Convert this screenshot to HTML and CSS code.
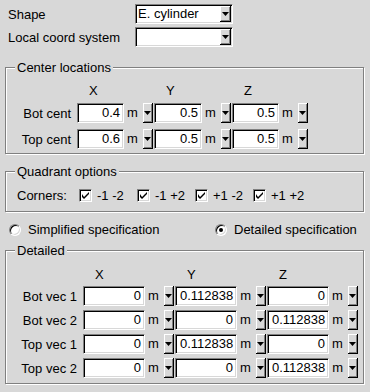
FILE: index.html
```html
<!DOCTYPE html>
<html lang="en">
<head>
  <meta charset="UTF-8">
  <title>Shape dialog</title>
  <link rel="stylesheet" href="styles.css">
</head>
<body>
  <div class="dialog">
    <div class="field-row">
      <span class="lbl">Shape</span>
      <div class="combo">
        <span class="combo-text">E. cylinder</span>
        <span class="drop-btn"><svg width="7" height="4" viewBox="0 0 7 4"><path d="M0 0H7L3.5 4Z" fill="#000"/></svg></span>
      </div>
    </div>
    <div class="field-row">
      <span class="lbl">Local coord system</span>
      <div class="combo">
        <span class="combo-text"></span>
        <span class="drop-btn"><svg width="7" height="4" viewBox="0 0 7 4"><path d="M0 0H7L3.5 4Z" fill="#000"/></svg></span>
      </div>
    </div>

    <fieldset class="group group-center">
      <legend>Center locations</legend>
      <div class="grid grid-center">
        <span></span><span class="hdr">X</span><span class="hdr">Y</span><span class="hdr">Z</span>

        <span class="row-lbl">Bot cent</span>
        <div class="cell"><span class="num">0.4</span><div class="unit">m<span class="drop-btn"><svg width="7" height="4" viewBox="0 0 7 4"><path d="M0 0H7L3.5 4Z" fill="#000"/></svg></span></div></div>
        <div class="cell"><span class="num">0.5</span><div class="unit">m<span class="drop-btn"><svg width="7" height="4" viewBox="0 0 7 4"><path d="M0 0H7L3.5 4Z" fill="#000"/></svg></span></div></div>
        <div class="cell"><span class="num">0.5</span><div class="unit">m<span class="drop-btn"><svg width="7" height="4" viewBox="0 0 7 4"><path d="M0 0H7L3.5 4Z" fill="#000"/></svg></span></div></div>

        <span class="row-lbl">Top cent</span>
        <div class="cell"><span class="num">0.6</span><div class="unit">m<span class="drop-btn"><svg width="7" height="4" viewBox="0 0 7 4"><path d="M0 0H7L3.5 4Z" fill="#000"/></svg></span></div></div>
        <div class="cell"><span class="num">0.5</span><div class="unit">m<span class="drop-btn"><svg width="7" height="4" viewBox="0 0 7 4"><path d="M0 0H7L3.5 4Z" fill="#000"/></svg></span></div></div>
        <div class="cell"><span class="num">0.5</span><div class="unit">m<span class="drop-btn"><svg width="7" height="4" viewBox="0 0 7 4"><path d="M0 0H7L3.5 4Z" fill="#000"/></svg></span></div></div>
      </div>
    </fieldset>

    <fieldset class="group group-quad">
      <legend>Quadrant options</legend>
      <div class="corners">
        <span class="corners-lbl">Corners:</span>
        <span class="check-item"><span class="checkbox"><svg width="7" height="7" viewBox="0 0 7 7"><path d="M0 2V5L2 7L7 2V0L2 5Z" fill="#000"/></svg></span>-1 -2</span>
        <span class="check-item"><span class="checkbox"><svg width="7" height="7" viewBox="0 0 7 7"><path d="M0 2V5L2 7L7 2V0L2 5Z" fill="#000"/></svg></span>-1 +2</span>
        <span class="check-item"><span class="checkbox"><svg width="7" height="7" viewBox="0 0 7 7"><path d="M0 2V5L2 7L7 2V0L2 5Z" fill="#000"/></svg></span>+1 -2</span>
        <span class="check-item"><span class="checkbox"><svg width="7" height="7" viewBox="0 0 7 7"><path d="M0 2V5L2 7L7 2V0L2 5Z" fill="#000"/></svg></span>+1 +2</span>
      </div>
    </fieldset>

    <div class="radios">
      <span class="radio-item first"><span class="radio"></span>Simplified specification</span>
      <span class="radio-item"><span class="radio checked"></span>Detailed specification</span>
    </div>

    <fieldset class="group group-detail">
      <legend>Detailed</legend>
      <div class="grid grid-detail">
        <span></span><span class="hdr">X</span><span class="hdr">Y</span><span class="hdr">Z</span>

        <span class="row-lbl">Bot vec 1</span>
        <div class="cell"><span class="num">0</span><div class="unit">m<span class="drop-btn"><svg width="7" height="4" viewBox="0 0 7 4"><path d="M0 0H7L3.5 4Z" fill="#000"/></svg></span></div></div>
        <div class="cell"><span class="num left">0.112838</span><div class="unit">m<span class="drop-btn"><svg width="7" height="4" viewBox="0 0 7 4"><path d="M0 0H7L3.5 4Z" fill="#000"/></svg></span></div></div>
        <div class="cell"><span class="num">0</span><div class="unit">m<span class="drop-btn"><svg width="7" height="4" viewBox="0 0 7 4"><path d="M0 0H7L3.5 4Z" fill="#000"/></svg></span></div></div>

        <span class="row-lbl">Bot vec 2</span>
        <div class="cell"><span class="num">0</span><div class="unit">m<span class="drop-btn"><svg width="7" height="4" viewBox="0 0 7 4"><path d="M0 0H7L3.5 4Z" fill="#000"/></svg></span></div></div>
        <div class="cell"><span class="num">0</span><div class="unit">m<span class="drop-btn"><svg width="7" height="4" viewBox="0 0 7 4"><path d="M0 0H7L3.5 4Z" fill="#000"/></svg></span></div></div>
        <div class="cell"><span class="num left">0.112838</span><div class="unit">m<span class="drop-btn"><svg width="7" height="4" viewBox="0 0 7 4"><path d="M0 0H7L3.5 4Z" fill="#000"/></svg></span></div></div>

        <span class="row-lbl">Top vec 1</span>
        <div class="cell"><span class="num">0</span><div class="unit">m<span class="drop-btn"><svg width="7" height="4" viewBox="0 0 7 4"><path d="M0 0H7L3.5 4Z" fill="#000"/></svg></span></div></div>
        <div class="cell"><span class="num left">0.112838</span><div class="unit">m<span class="drop-btn"><svg width="7" height="4" viewBox="0 0 7 4"><path d="M0 0H7L3.5 4Z" fill="#000"/></svg></span></div></div>
        <div class="cell"><span class="num">0</span><div class="unit">m<span class="drop-btn"><svg width="7" height="4" viewBox="0 0 7 4"><path d="M0 0H7L3.5 4Z" fill="#000"/></svg></span></div></div>

        <span class="row-lbl">Top vec 2</span>
        <div class="cell"><span class="num">0</span><div class="unit">m<span class="drop-btn"><svg width="7" height="4" viewBox="0 0 7 4"><path d="M0 0H7L3.5 4Z" fill="#000"/></svg></span></div></div>
        <div class="cell"><span class="num">0</span><div class="unit">m<span class="drop-btn"><svg width="7" height="4" viewBox="0 0 7 4"><path d="M0 0H7L3.5 4Z" fill="#000"/></svg></span></div></div>
        <div class="cell"><span class="num left">0.112838</span><div class="unit">m<span class="drop-btn"><svg width="7" height="4" viewBox="0 0 7 4"><path d="M0 0H7L3.5 4Z" fill="#000"/></svg></span></div></div>
      </div>
    </fieldset>
  </div>
</body>
</html>
```

FILE: styles.css
```css
* {
  box-sizing: border-box;
  margin: 0;
  padding: 0;
}

body {
  background-color: #d8d8d8;
  font-family: "Liberation Sans", Arial, sans-serif;
  font-size: 13px;
  line-height: 15px;
  color: #000000;
}

.dialog {
  width: 370px;
  height: 392px;
  padding-top: 4px;
  overflow: hidden;
}

/* top rows */
.field-row {
  display: flex;
  align-items: center;
  height: 20px;
  padding-left: 8px;
  margin-bottom: 3px;
}

.field-row .lbl {
  width: 127px;
}

.combo {
  display: flex;
  width: 98px;
  height: 20px;
  background-color: #ffffff;
  border-top: 1px solid #808080;
  border-left: 1px solid #808080;
  border-right: 1px solid #ffffff;
  border-bottom: 1px solid #ffffff;
  box-shadow: inset 1px 1px #000000, inset -1px -1px #d8d8d8;
  padding: 1px;
}

.combo-text {
  flex: 1;
  padding-left: 1px;
  line-height: 16px;
}

/* raised drop-down button */
.drop-btn {
  display: flex;
  align-items: center;
  justify-content: center;
  width: 11px;
  background-color: #d8d8d8;
  border-right: 1px solid #000000;
  border-bottom: 1px solid #000000;
  box-shadow: inset 1px 1px #ffffff, inset -1px -1px #808080;
}

/* group boxes */
.group {
  width: 359px;
  margin-left: 5px;
  border: 1px solid #808080;
  box-shadow: inset 1px 1px #ffffff, 1px 1px #ffffff;
}

.group legend {
  margin-left: 9px;
  padding: 0 2px;
  background-color: #d8d8d8;
  line-height: 15px;
}

.group-center {
  margin-top: 13px;
  padding-bottom: 4px;
}

.group-quad {
  margin-top: 10px;
  padding-bottom: 8px;
}

.group-detail {
  margin-top: 6px;
  padding-bottom: 5px;
}

.grid {
  display: grid;
  align-items: center;
}

.grid-center {
  grid-template-columns: 71px 77px 78px 77px;
  grid-template-rows: 15px 20px 20px;
  row-gap: 6px;
  padding-top: 7px;
}

.grid-center .hdr {
  margin-bottom: -1px;
}

.grid-detail {
  grid-template-columns: 77px 92px 92px 92px;
  grid-template-rows: 15px 20px 20px 20px 20px;
  row-gap: 4px;
  padding-top: 9px;
}

.hdr {
  padding-left: 12px;
}

.row-lbl {
  text-align: right;
  padding-right: 6px;
}

.cell {
  display: flex;
  height: 20px;
}

.num {
  flex: 1;
  background-color: #ffffff;
  border-top: 1px solid #808080;
  border-left: 1px solid #808080;
  border-right: 1px solid #ffffff;
  border-bottom: 1px solid #ffffff;
  box-shadow: inset 1px 1px #000000, inset -1px -1px #d8d8d8;
  text-align: right;
  padding: 0 3px 0 2px;
  line-height: 18px;
}

.num.left {
  text-align: left;
  padding-left: 4px;
}

.unit {
  display: flex;
  width: 29px;
  margin-right: 1px;
  padding-left: 3px;
  line-height: 20px;
}

.unit .drop-btn {
  margin-left: auto;
  width: 10px;
}

/* quadrant options */
.corners {
  display: flex;
  align-items: center;
  height: 15px;
  margin-top: 9px;
  padding-left: 11px;
}

.corners-lbl {
  width: 62px;
}

.check-item {
  display: flex;
  align-items: center;
  width: 58px;
}

.checkbox {
  display: flex;
  align-items: center;
  justify-content: center;
  width: 13px;
  height: 13px;
  margin-right: 5px;
  background-color: #ffffff;
  border-top: 1px solid #808080;
  border-left: 1px solid #808080;
  border-right: 1px solid #ffffff;
  border-bottom: 1px solid #ffffff;
  box-shadow: inset 1px 1px #000000, inset -1px -1px #d8d8d8;
}

/* radio row */
.radios {
  display: flex;
  align-items: center;
  height: 15px;
  margin-top: 10px;
  padding-left: 9px;
}

.radio-item {
  display: flex;
  align-items: center;
}

.radio-item.first {
  width: 206px;
}

.radio {
  display: flex;
  align-items: center;
  justify-content: center;
  width: 12px;
  height: 12px;
  margin-right: 7px;
  border-radius: 50%;
  background-color: #ffffff;
  border-top: 1px solid #808080;
  border-left: 1px solid #808080;
  border-right: 1px solid #ffffff;
  border-bottom: 1px solid #ffffff;
  box-shadow: inset 1px 1px #000000, inset -1px -1px #d8d8d8;
}

.radio.checked::after {
  content: "";
  width: 4px;
  height: 4px;
  border-radius: 50%;
  background-color: #000000;
}
```
